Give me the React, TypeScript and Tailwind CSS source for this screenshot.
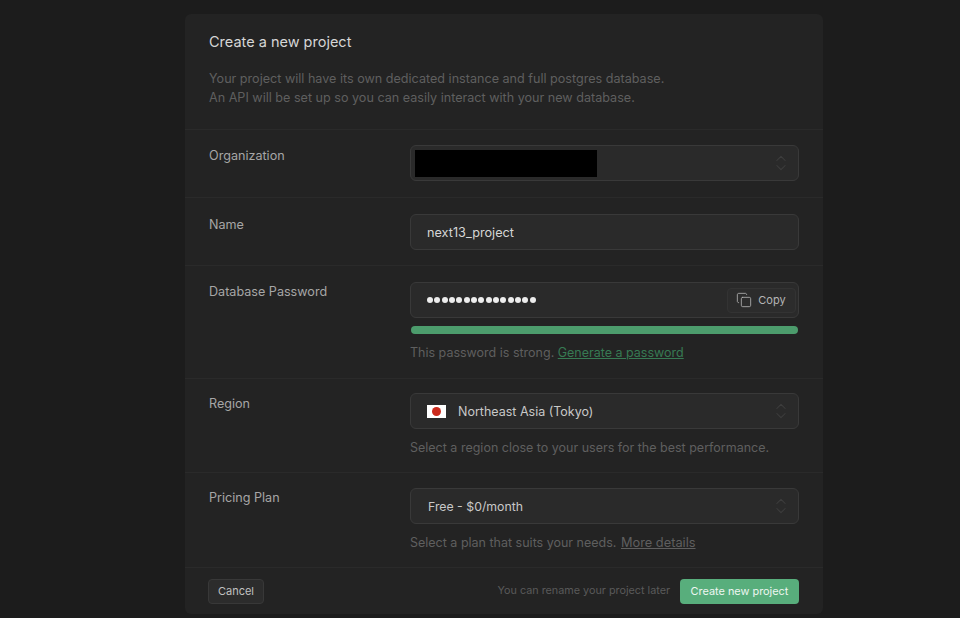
import { ChevronsUpDown, Copy } from "lucide-react";
import type { ReactNode } from "react";

const fieldBox = "h-9 rounded-md border border-[#393939] bg-[#2a2a2a] flex items-center";

function Row({
  label,
  className,
  labelClass = "",
  children,
}: {
  label: string;
  className: string;
  labelClass?: string;
  children: ReactNode;
}) {
  return (
    <div className={`flex px-6 border-b border-[#2a2a2a] ${className}`}>
      <label className={`w-[201px] shrink-0 text-[12.6px] leading-5 text-[#a6a6a6] ${labelClass}`}>{label}</label>
      <div className="flex-1 flex flex-col">{children}</div>
    </div>
  );
}

function SelectBox({ children }: { children: ReactNode }) {
  return (
    <div className={`${fieldBox} relative`}>
      {children}
      <ChevronsUpDown
        className="absolute right-[7px] top-1/2 -translate-y-1/2 w-5 h-5 text-[#3d3d3d]"
        strokeWidth={1.25}
      />
    </div>
  );
}

function Help({ children }: { children: ReactNode }) {
  return <p className="mt-[10px] text-[12.5px] leading-[18px] text-[#5f5f5f]">{children}</p>;
}

export default function App() {
  return (
    <div className="h-[618px] overflow-hidden bg-[#1c1c1c] pt-[14px] pl-[185px] font-['Inter',sans-serif]">
      <div className="w-[638px] h-[600px] rounded-md bg-[#232323] flex flex-col">
        <div className="h-[116px] px-6 pt-[18px] border-b border-[#2a2a2a]">
          <h1 className="text-[14.5px] leading-5 text-[#d6d6d6]">Create a new project</h1>
          <p className="mt-[17px] text-[12.6px] leading-[19px] text-[#5f5f5f]">
            Your project will have its own dedicated instance and full postgres database.
            <br />
            An API will be set up so you can easily interact with your new database.
          </p>
        </div>

        <Row label="Organization" className="h-[68px] pt-[15px]" labelClass="pt-px">
          <SelectBox>
            <div className="ml-1 w-[182px] h-[27px] bg-black" />
          </SelectBox>
        </Row>

        <Row label="Name" className="h-[68px] pt-4" labelClass="pt-px">
          <div className={`${fieldBox} px-4 pt-px text-[12.7px] text-[#d6d6d6]`}>next13_project</div>
        </Row>

        <Row label="Database Password" className="h-[113px] pt-4">
          <div className={`${fieldBox} justify-between pl-4 pr-[2px]`}>
            <div className="flex gap-[1.33px]">
              {Array.from({ length: 15 }).map((_, i) => (
                <span key={i} className="w-[6px] h-[6px] rounded-full bg-[#ededed]" />
              ))}
            </div>
            <button className="h-[25px] w-[69px] pr-px rounded border border-[#333333] bg-[#2c2c2c] flex items-center justify-center gap-[6px] text-[11px] text-[#b5b5b5]">
              <Copy className="w-4 h-4" strokeWidth={1.25} />
              Copy
            </button>
          </div>
          <div className="mt-2 mx-px h-2 rounded-full bg-[#4c9c6c]" />
          <p className="mt-[10px] text-[12.5px] leading-[18px] text-[#5f5f5f]">
            This password is strong.{" "}
            <a className="underline text-[#377a53]">Generate a password</a>
          </p>
        </Row>

        <Row label="Region" className="h-[94px] pt-[14px]" labelClass="pt-px">
          <SelectBox>
            <div className="ml-[16px] w-[19px] h-[13px] bg-white flex items-center justify-center">
              <span className="w-[9px] h-[9px] rounded-full bg-[#cb2a1c]" />
            </div>
            <span className="ml-3 pt-[2px] text-[12.5px] text-[#c8c8c8]">Northeast Asia (Tokyo)</span>
          </SelectBox>
          <Help>Select a region close to your users for the best performance.</Help>
        </Row>

        <Row label="Pricing Plan" className="h-[95px] pt-[15px]">
          <SelectBox>
            <span className="ml-[17px] pt-[2px] text-[12.3px] text-[#c8c8c8]">Free - $0/month</span>
          </SelectBox>
          <Help>
            Select a plan that suits your needs. <a className="underline ml-px text-[12.8px]">More details</a>
          </Help>
        </Row>

        <div className="flex-1 flex items-center justify-between pl-[23px] pr-6">
          <button className="h-[25px] w-14 rounded border border-[#383838] bg-[#2c2c2c] text-[11px] text-[#c0c0c0]">
            Cancel
          </button>
          <div className="flex items-center gap-[10px]">
            <span className="text-[10.8px] text-[#5a5a5a]">You can rename your project later</span>
            <button className="h-[25px] w-[119px] rounded bg-[#58ae7c] text-[10.9px] text-[#eef6f1]">
              Create new project
            </button>
          </div>
        </div>
      </div>
    </div>
  );
}
